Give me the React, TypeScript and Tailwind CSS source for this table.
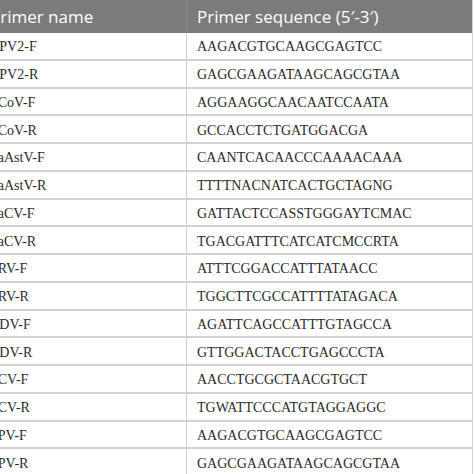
const rows: [string, string][] = [
  ['CPV2-F', 'AAGACGTGCAAGCGAGTCC'],
  ['CPV2-R', 'GAGCGAAGATAAGCAGCGTAA'],
  ['FCoV-F', 'AGGAAGGCAACAATCCAATA'],
  ['FCoV-R', 'GCCACCTCTGATGGACGA'],
  ['FaAstV-F', 'CAANTCACAACCCAAAACAAA'],
  ['FaAstV-R', 'TTTTNACNATCACTGCTAGNG'],
  ['FaCV-F', 'GATTACTCCASSTGGGAYTCMAC'],
  ['FaCV-R', 'TGACGATTTCATCATCMCCRTA'],
  ['FRV-F', 'ATTTCGGACCATTTATAACC'],
  ['FRV-R', 'TGGCTTCGCCATTTTATAGACA'],
  ['CDV-F', 'AGATTCAGCCATTTGTAGCCA'],
  ['CDV-R', 'GTTGGACTACCTGAGCCCTA'],
  ['FCV-F', 'AACCTGCGCTAACGTGCT'],
  ['FCV-R', 'TGWATTCCCATGTAGGAGGC'],
  ['FPV-F', 'AAGACGTGCAAGCGAGTCC'],
  ['FPV-R', 'GAGCGAAGATAAGCAGCGTAA'],
];

export default function App() {
  return (
    <div className="w-[474px] h-[474px] overflow-hidden bg-white">
      <div className="-ml-[21px] w-[494px] border-r border-[#d0d0d0]">
        {/* header */}
        <div className="grid grid-cols-[208px_1fr] h-[33px] bg-[#7b7b7b] text-white text-[17px] font-[family-name:'Open_Sans',sans-serif]">
          <div className="flex items-center pl-[11px] border-r border-[#8c8c8c]">Primer name</div>
          <div className="flex items-center pl-[10px]">Primer sequence (5′-3′)</div>
        </div>

        {/* rows */}
        {rows.map(([name, seq]) => (
          <div
            key={name}
            className="grid grid-cols-[208px_1fr] h-[27.75px] border-b-2 border-[#d2d2d2] text-[14px] text-[#2b2b2b] font-[family-name:'Liberation_Serif',serif]"
          >
            <div className="flex items-center pt-[2px] pl-[11px] border-r border-[#d0d0d0] whitespace-nowrap">{name}</div>
            <div className="flex items-center pt-[2px] pl-[10px] whitespace-nowrap">{seq}</div>
          </div>
        ))}
      </div>
    </div>
  );
}
